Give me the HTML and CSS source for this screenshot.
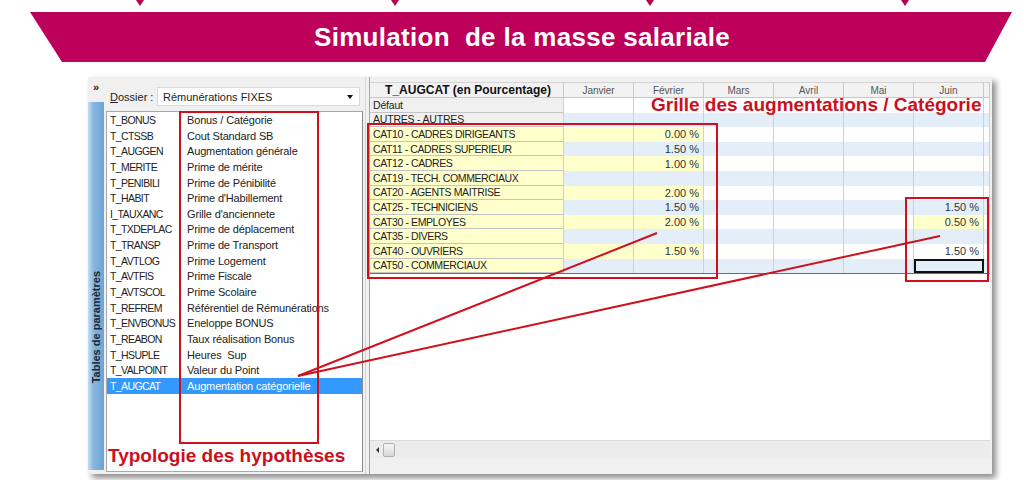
FILE: index.html
```html
<!DOCTYPE html>
<html lang="fr">
<head>
<meta charset="utf-8">
<title>Simulation de la masse salariale</title>
<link rel="stylesheet" href="styles.css">
</head>
<body>
<div class="page">
  <div class="markers"><span class="mk"></span><span class="mk"></span><span class="mk"></span><span class="mk"></span></div>
  <div class="banner"><h1>Simulation  de la masse salariale</h1></div>

  <div class="window">
    <div class="left">
      <div class="vstrip">
        <div class="chev">»</div>
        <div class="vtab"><span>Tables de paramètres</span></div>
      </div>
      <div class="lcontent">
        <div class="dossier">
          <span class="lbl"><u>D</u>ossier :</span>
          <div class="select"><span>Rémunérations FIXES</span><span class="arrow"></span></div>
        </div>
        <div class="list">
          <div class="row"><span class="code">T_BONUS</span><span>Bonus / Catégorie</span></div>
          <div class="row"><span class="code">T_CTSSB</span><span>Cout Standard SB</span></div>
          <div class="row"><span class="code">T_AUGGEN</span><span>Augmentation générale</span></div>
          <div class="row"><span class="code">T_MERITE</span><span>Prime de mérite</span></div>
          <div class="row"><span class="code">T_PENIBILI</span><span>Prime de Pénibilité</span></div>
          <div class="row"><span class="code">T_HABIT</span><span>Prime d'Habillement</span></div>
          <div class="row"><span class="code">I_TAUXANC</span><span>Grille d'anciennete</span></div>
          <div class="row"><span class="code">T_TXDEPLAC</span><span>Prime de déplacement</span></div>
          <div class="row"><span class="code">T_TRANSP</span><span>Prime de Transport</span></div>
          <div class="row"><span class="code">T_AVTLOG</span><span>Prime Logement</span></div>
          <div class="row"><span class="code">T_AVTFIS</span><span>Prime Fiscale</span></div>
          <div class="row"><span class="code">T_AVTSCOL</span><span>Prime Scolaire</span></div>
          <div class="row"><span class="code">T_REFREM</span><span>Référentiel de Rémunérations</span></div>
          <div class="row"><span class="code">T_ENVBONUS</span><span>Eneloppe BONUS</span></div>
          <div class="row"><span class="code">T_REABON</span><span>Taux réalisation Bonus</span></div>
          <div class="row"><span class="code">T_HSUPLE</span><span>Heures  Sup</span></div>
          <div class="row"><span class="code">T_VALPOINT</span><span>Valeur du Point</span></div>
          <div class="row sel"><span class="code">T_AUGCAT</span><span>Augmentation catégorielle</span></div>
        </div>
      </div>
    </div>
    <div class="splitter"></div>
    <div class="right">
      <div class="grid">
        <div class="grow hdr">
          <div class="c0">T_AUGCAT (en Pourcentage)</div>
          <div class="c">Janvier</div><div class="c">Février</div><div class="c">Mars</div>
          <div class="c">Avril</div><div class="c">Mai</div><div class="c">Juin</div><div class="cl"></div>
        </div>
        <div class="grow w">
          <div class="c0 g">Défaut</div>
          <div class="c"></div><div class="c"></div><div class="c"></div><div class="c"></div><div class="c"></div><div class="c"></div><div class="cl"></div>
        </div>
        <div class="grow b">
          <div class="c0 g">AUTRES - AUTRES</div>
          <div class="c"></div><div class="c"></div><div class="c"></div><div class="c"></div><div class="c"></div><div class="c"></div><div class="cl"></div>
        </div>
        <div class="grow w">
          <div class="c0 y">CAT10 - CADRES DIRIGEANTS</div>
          <div class="c y"></div><div class="c y">0.00 %</div><div class="c"></div><div class="c"></div><div class="c"></div><div class="c"></div><div class="cl"></div>
        </div>
        <div class="grow b">
          <div class="c0 y">CAT11 - CADRES SUPERIEUR</div>
          <div class="c"></div><div class="c">1.50 %</div><div class="c"></div><div class="c"></div><div class="c"></div><div class="c"></div><div class="cl"></div>
        </div>
        <div class="grow w">
          <div class="c0 y">CAT12 - CADRES</div>
          <div class="c y"></div><div class="c y">1.00 %</div><div class="c"></div><div class="c"></div><div class="c"></div><div class="c"></div><div class="cl"></div>
        </div>
        <div class="grow b">
          <div class="c0 y">CAT19 - TECH. COMMERCIAUX</div>
          <div class="c"></div><div class="c"></div><div class="c"></div><div class="c"></div><div class="c"></div><div class="c"></div><div class="cl"></div>
        </div>
        <div class="grow w">
          <div class="c0 y">CAT20 - AGENTS MAITRISE</div>
          <div class="c y"></div><div class="c y">2.00 %</div><div class="c"></div><div class="c"></div><div class="c"></div><div class="c"></div><div class="cl"></div>
        </div>
        <div class="grow b">
          <div class="c0 y">CAT25 - TECHNICIENS</div>
          <div class="c"></div><div class="c">1.50 %</div><div class="c"></div><div class="c"></div><div class="c"></div><div class="c">1.50 %</div><div class="cl"></div>
        </div>
        <div class="grow w">
          <div class="c0 y">CAT30 - EMPLOYES</div>
          <div class="c y"></div><div class="c y">2.00 %</div><div class="c"></div><div class="c"></div><div class="c"></div><div class="c y">0.50 %</div><div class="cl"></div>
        </div>
        <div class="grow b">
          <div class="c0 y">CAT35 - DIVERS</div>
          <div class="c"></div><div class="c"></div><div class="c"></div><div class="c"></div><div class="c"></div><div class="c"></div><div class="cl"></div>
        </div>
        <div class="grow w">
          <div class="c0 y">CAT40 - OUVRIERS</div>
          <div class="c y"></div><div class="c y">1.50 %</div><div class="c"></div><div class="c"></div><div class="c"></div><div class="c">1.50 %</div><div class="cl"></div>
        </div>
        <div class="grow b last">
          <div class="c0 y">CAT50 - COMMERCIAUX</div>
          <div class="c"></div><div class="c"></div><div class="c"></div><div class="c"></div><div class="c"></div><div class="c cur"></div><div class="cl"></div>
        </div>
      </div>
      <div class="empty"></div>
      <div class="hscroll"><span class="larr"></span><span class="thumb"></span></div>
      <div class="foot"></div>
    </div>
  </div>

  <div class="box box-a"></div>
  <div class="box box-b"></div>
  <div class="box box-c"></div>
  <div class="note note-typo">Typologie des hypothèses</div>
  <div class="note note-grille">Grille des augmentations / Catégorie</div>
  <svg class="lines" width="1024" height="480" viewBox="0 0 1024 480">
    <line x1="298" y1="376" x2="657" y2="233"/>
    <line x1="298" y1="376" x2="940" y2="236"/>
  </svg>
</div>
</body>
</html>
```

FILE: styles.css
```css
* { box-sizing: border-box; }

body {
  margin: 0;
  background: #ffffff;
  font-family: "Liberation Sans", Arial, sans-serif;
  color: #222;
}

.page {
  position: relative;
  width: 1024px;
  height: 480px;
  overflow: hidden;
}

/* top markers */
.markers {
  height: 12px;
  display: flex;
  padding-left: 136px;
  gap: 247px;
}
.mk {
  width: 0;
  height: 0;
  border-left: 4px solid transparent;
  border-right: 4px solid transparent;
  border-top: 6px solid #b3004f;
}

/* banner */
.banner {
  height: 50px;
  background: #bd0059;
  clip-path: polygon(30px 0, 1012px 0, 985px 100%, 62px 100%);
  display: flex;
  align-items: center;
  justify-content: center;
  padding-left: 20px;
}
.banner h1 {
  margin: 0;
  color: #ffffff;
  font: bold 26px "Liberation Sans", Arial, sans-serif;
  letter-spacing: 0.3px;
  white-space: pre;
}

/* window */
.window {
  margin: 15px 0 0 88px;
  width: 904px;
  height: 397px;
  display: flex;
  background: #f0f0f0;
  box-shadow: 4px 4px 6px rgba(0, 0, 0, 0.45);
}

.left {
  width: 277px;
  display: flex;
}

.vstrip {
  width: 16px;
  display: flex;
  flex-direction: column;
}
.chev {
  height: 25px;
  font-size: 11px;
  font-weight: bold;
  padding: 5px 0 0 5px;
  line-height: 11px;
}
.vtab {
  flex: 1;
  margin-bottom: 4px;
  background: linear-gradient(to right, #c4dcf1 0%, #86b6df 35%, #6da3d4 100%);
  display: flex;
  flex-direction: column;
  justify-content: flex-end;
  align-items: center;
  padding-bottom: 87px;
}
.vtab span {
  writing-mode: vertical-rl;
  transform: rotate(180deg);
  font-size: 11px;
  font-weight: bold;
  color: #1c2838;
  white-space: nowrap;
}

.lcontent {
  flex: 1;
  display: flex;
  flex-direction: column;
}
.dossier {
  height: 19px;
  margin-top: 10px;
  display: flex;
  align-items: center;
  padding-left: 6px;
  font-size: 11px;
}
.lbl {
  width: 47px;
}
.select {
  width: 203px;
  height: 19px;
  background: #ffffff;
  border: 1px solid #dadada;
  padding: 0 6px 0 5px;
  display: flex;
  align-items: center;
  justify-content: space-between;
}
.arrow {
  width: 0;
  height: 0;
  border-left: 3px solid transparent;
  border-right: 3px solid transparent;
  border-top: 4px solid #111;
}

.list {
  margin: 5px 2px 2px 2px;
  flex: 1;
  background: #ffffff;
  border: 1px solid #a8a8a8;
  border-right-color: #8a8a8a;
  padding-top: 0.2px;
}
.row {
  height: 15.65px;
  display: flex;
  align-items: center;
  font-size: 11px;
  letter-spacing: -0.15px;
  color: #222;
  white-space: pre;
}
.code {
  width: 80px;
  padding-left: 3px;
  font-size: 10.5px;
  letter-spacing: -0.6px;
}
.row.sel {
  background: #3399ff;
  color: #ffffff;
}

.splitter {
  width: 4px;
  border-left: 1px solid #d6d6d6;
}

/* right grid */
.right {
  width: 623px;
  display: flex;
  flex-direction: column;
  padding: 5px 2px 2px 0;
  border-left: 1px solid #a6a6a6;
}
.grid {
  background: #ffffff;
  border-bottom: 1px solid #6e6e6e;
}
.grow {
  display: flex;
  height: 14.6px;
  font-size: 11px;
}
.grow > div {
  display: flex;
  align-items: center;
  border-right: 1px solid #d0d0d0;
  white-space: nowrap;
  overflow: hidden;
}
.c0 {
  width: 194px;
  padding-left: 3px;
  border-bottom: 1px solid #c4c4c4;
  font-size: 10.5px;
  letter-spacing: -0.4px;
}
.c {
  width: 70px;
  justify-content: flex-end;
  padding-right: 4px;
  color: #333;
}
.cl {
  flex: 1;
}

.hdr {
  height: 16px;
  background: #f2f2f2;
  border-top: 1px solid #d4d4d4;
}
.hdr > div {
  border-right: 1px solid #c8c8c8;
  border-bottom: 1px solid #c8c8c8;
}
.hdr .c0 {
  font-size: 12px;
  letter-spacing: 0;
  font-weight: bold;
  justify-content: center;
  color: #111;
}
.hdr .c {
  justify-content: center;
  padding-right: 0;
  font-size: 10px;
  color: #555;
}

.grow.b > div { background: #e3eef8; }
.grow.w > div { background: #ffffff; }
.grow > .c0.g { background: #f0f0f0; letter-spacing: -0.2px; }
.grow > .c0.y { background: #ffffcc; }
.grow > .c.y { background: #ffffcc; }
.grow > .c.cur {
  border: 2px solid #111;
}

.empty {
  flex: 1;
  background: #ffffff;
}
.hscroll {
  height: 18px;
  background: #ececec;
  border-top: 1px solid #dddddd;
  display: flex;
  align-items: center;
  padding-left: 6px;
  gap: 4px;
}
.larr {
  width: 0;
  height: 0;
  border-top: 3px solid transparent;
  border-bottom: 3px solid transparent;
  border-right: 3px solid #333;
}
.thumb {
  width: 12px;
  height: 14px;
  border: 1px solid #b0b0b0;
  border-radius: 2px;
  background: linear-gradient(#f6f6f6, #d8d8d8);
}
.foot {
  height: 14px;
  background: #f0f0f0;
}

/* annotations */
.box {
  position: absolute;
  border: 2px solid #d0101c;
}
.box-a { left: 179px; top: 111px; width: 140px; height: 333px; }
.box-b { left: 367px; top: 123px; width: 351px; height: 156px; }
.box-c { left: 905px; top: 197px; width: 84px; height: 85px; }

.note {
  position: absolute;
  color: #cc0f1c;
  font: bold 19px "Liberation Sans", Arial, sans-serif;
  white-space: nowrap;
}
.note-typo { left: 108px; top: 445px; }
.note-grille { left: 651px; top: 94px; }

.lines {
  position: absolute;
  left: 0;
  top: 0;
  pointer-events: none;
}
.lines line {
  stroke: #d0101c;
  stroke-width: 2;
}
```
